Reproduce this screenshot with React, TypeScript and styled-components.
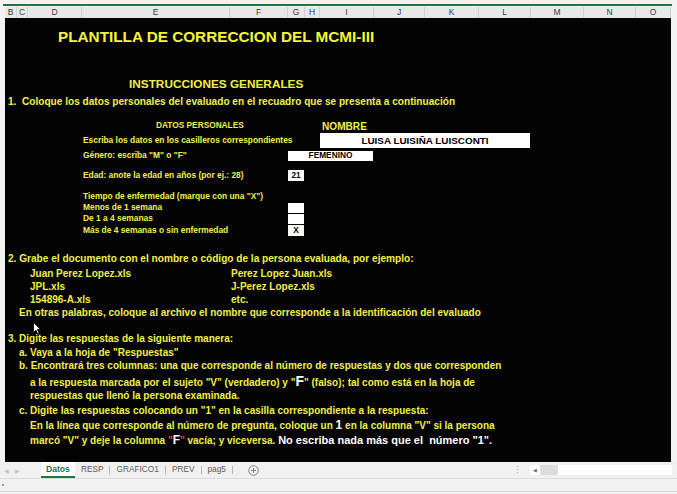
import React from "react";
import styled, { createGlobalStyle } from "styled-components";

const GlobalStyle = createGlobalStyle`
  html, body { margin: 0; padding: 0; background: #f3f3f3; }
  body {
    font-family: "Liberation Sans", Arial, sans-serif;
    width: 677px; height: 494px; overflow: hidden;
  }
`;

const COLS = "12px 11px 54px 148px 58px 17px 15px 54px 51px 54px 52px 53px 52px 35px";
const LETTERS = ["B", "C", "D", "E", "F", "G", "H", "I", "J", "K", "L", "M", "N", "O"];

const YEL = "#f0ef48";

const Window = styled.div`
  width: 677px;
  height: 494px;
  display: flex;
  flex-direction: column;
  background: #f3f3f3;
`;

const GreenLine = styled.div`
  height: 2px;
  margin: 4px 5px 0 3px;
  background: #217346;
`;

const HeaderRow = styled.div`
  margin: 1px 0 0 5px;
  width: 666px;
  height: 11px;
  display: grid;
  grid-template-columns: ${COLS};
  background: #e8e8e8;
`;

const HeaderCell = styled.div`
  display: flex;
  align-items: center;
  justify-content: center;
  font-size: 8.5px;
  color: #3a3a3a;
  border-right: 1px solid #cfcfcf;
  line-height: 1;
`;

const Sheet = styled.div`
  position: relative;
  margin-left: 5px;
  width: 666px;
  height: 444px;
  background: #030303;
  overflow: hidden;
  padding-top: 10px;
  box-sizing: border-box;
`;

const Row = styled.div<{ $h: number; $mt?: number }>`
  display: grid;
  grid-template-columns: ${COLS};
  grid-template-rows: ${(p) => p.$h}px;
  height: ${(p) => p.$h}px;
  margin-top: ${(p) => p.$mt ?? 0}px;
  align-items: center;
`;

const Cell = styled.div<{ $col: number; $span?: number; $pl?: number; $self?: string }>`
  grid-column: ${(p) => p.$col} / span ${(p) => p.$span ?? 1};
  padding-left: ${(p) => p.$pl ?? 0}px;
  white-space: pre;
  overflow: visible;
  align-self: ${(p) => p.$self ?? "center"};
  min-width: 0;
  font-size: 10px;
  line-height: 1;
  display: flex;
  align-items: baseline;
`;

const Txt = styled.span<{ $size?: number; $color?: string }>`
  font-weight: bold;
  font-size: ${(p) => p.$size ?? 10}px;
  color: ${(p) => p.$color ?? YEL};
  line-height: 1;
`;

const Box = styled.div<{ $col: number; $span?: number; $h?: number }>`
  grid-column: ${(p) => p.$col} / span ${(p) => p.$span ?? 1};
  height: ${(p) => p.$h ?? 11}px;
  background: #ffffff;
  margin: 0 1px 0 0;
  display: flex;
  align-items: center;
  justify-content: center;
  font-weight: bold;
  font-size: ${(p) => (p.$h && p.$h > 12 ? 9.9 : 8.3)}px;
  line-height: 1;
  color: #000;
  white-space: nowrap;
  overflow: visible;
`;

const Cursor = styled.svg`
  position: absolute;
  left: 28px;
  top: 304px;
`;

const TabBar = styled.div`
  height: 16px;
  display: flex;
  align-items: stretch;
  background: #f0f0f0;
  font-size: 8.3px;
`;

const NavArrows = styled.div`
  width: 41px;
  display: flex;
  align-items: center;
  gap: 6px;
  padding-left: 4px;
  box-sizing: border-box;
  color: #c4c4c4;
  font-size: 6px;
`;

const Tab = styled.div<{ $active?: boolean }>`
  display: flex;
  align-items: center;
  padding: 0 ${(p) => (p.$active ? 5 : 6)}px;
  background: ${(p) => (p.$active ? "#ffffff" : "transparent")};
  color: ${(p) => (p.$active ? "#217346" : "#5a5a5a")};
  font-weight: ${(p) => (p.$active ? "bold" : "normal")};
  font-size: ${(p) => (p.$active ? 8.6 : 8.3)}px;
  border-bottom: 2px solid ${(p) => (p.$active ? "#217346" : "transparent")};
  box-sizing: border-box;
`;

const TabSep = styled.div`
  width: 1px;
  background: #b8b8b8;
  margin: 4px 0;
`;

const AddTab = styled.div`
  display: flex;
  align-items: center;
  margin-left: 15px;
`;

const Spacer = styled.div`
  flex: 1;
`;

const Dots = styled.div`
  display: flex;
  align-items: center;
  color: #a8a8a8;
  font-size: 9px;
  margin-right: 8px;
`;

const Scroll = styled.div`
  display: flex;
  align-items: center;
  width: 142px;
  margin-right: 5px;
`;

const ScrollBtn = styled.div`
  width: 10px;
  height: 10px;
  background: #ffffff;
  display: flex;
  align-items: center;
  justify-content: center;
  color: #666;
  font-size: 5px;
`;

const ScrollThumb = styled.div`
  width: 18px;
  height: 10px;
  background: #dcdcdc;
`;

const ScrollTrack = styled.div`
  flex: 1;
  height: 10px;
  background: #ffffff;
`;

const StatusBar = styled.div`
  height: 12px;
  background: #f1f1f1;
  border-top: 1px solid #dddddd;
  border-bottom: 1px solid #d6d6d6;
  display: flex;
  align-items: center;
  padding-left: 2px;
`;

const Dot = styled.div`
  width: 2px;
  height: 2px;
  background: #999;
`;

export default function App() {
  return (
    <>
      <GlobalStyle />
      <Window>
        <GreenLine />
        <HeaderRow>
          {LETTERS.map((l) => (
            <HeaderCell key={l}>{l}</HeaderCell>
          ))}
        </HeaderRow>
        <Sheet>
          <Row $h={18}>
            <Cell $col={3} $pl={30}>
              <Txt $size={15.3} $color="#f6f53a">PLANTILLA DE CORRECCION DEL MCMI-III</Txt>
            </Cell>
          </Row>
          <Row $h={16} $mt={31}>
            <Cell $col={4} $pl={47}>
              <Txt $size={11.8}>INSTRUCCIONES GENERALES</Txt>
            </Cell>
          </Row>
          <Row $h={14} $mt={2}>
            <Cell $col={1} $pl={3}>
              <Txt $size={10.1}>1.  Coloque los datos personales del evaluado en el recuadro que se presenta a continuación</Txt>
            </Cell>
          </Row>
          <Row $h={14} $mt={9}>
            <Cell $col={4} $pl={74}>
              <Txt $size={8.3}>DATOS PERSONALES</Txt>
            </Cell>
            <Cell $col={8} $pl={2} $self="end">
              <Txt $size={10.1}>NOMBRE</Txt>
            </Cell>
          </Row>
          <Row $h={15} $mt={1}>
            <Cell $col={4} $pl={1}>
              <Txt $size={8.4}>Escriba los datos en los casilleros correspondientes</Txt>
            </Cell>
            <Box $col={8} $span={4} $h={15}>LUISA LUISIÑA LUISCONTI</Box>
          </Row>
          <Row $h={11} $mt={2}>
            <Cell $col={4} $pl={1}>
              <Txt $size={8.4}>Género: escriba "M" o "F"</Txt>
            </Cell>
            <Box $col={6} $span={3} $h={10}>FEMENINO</Box>
          </Row>
          <Row $h={11} $mt={9}>
            <Cell $col={4} $pl={1}>
              <Txt $size={8.4}>Edad: anote la edad en años (por ej.: 28)</Txt>
            </Cell>
            <Box $col={6}>21</Box>
          </Row>
          <Row $h={11} $mt={10}>
            <Cell $col={4} $pl={1}>
              <Txt $size={8.4}>Tiempo de enfermedad (marque con una "X")</Txt>
            </Cell>
          </Row>
          <Row $h={11} $mt={0}>
            <Cell $col={4} $pl={1}>
              <Txt $size={8.4}>Menos de 1 semana</Txt>
            </Cell>
            <Box $col={6} $h={10} />
          </Row>
          <Row $h={11}>
            <Cell $col={4} $pl={1}>
              <Txt $size={8.4}>De 1 a 4 semanas</Txt>
            </Cell>
            <Box $col={6} $h={10} />
          </Row>
          <Row $h={11} $mt={1}>
            <Cell $col={4} $pl={1}>
              <Txt $size={8.4}>Más de 4 semanas o sin enfermedad</Txt>
            </Cell>
            <Box $col={6}>X</Box>
          </Row>

          <Row $h={14} $mt={16}>
            <Cell $col={1} $pl={3}>
              <Txt $size={10.1}>2. Grabe el documento con el nombre o código de la persona evaluada, por ejemplo:</Txt>
            </Cell>
          </Row>
          <Row $h={13} $mt={1}>
            <Cell $col={3} $pl={2}><Txt>Juan Perez Lopez.xls</Txt></Cell>
            <Cell $col={5} $pl={1}><Txt>Perez Lopez Juan.xls</Txt></Cell>
          </Row>
          <Row $h={13}>
            <Cell $col={3} $pl={2}><Txt>JPL.xls</Txt></Cell>
            <Cell $col={5} $pl={1}><Txt>J-Perez Lopez.xls</Txt></Cell>
          </Row>
          <Row $h={13}>
            <Cell $col={3} $pl={2}><Txt>154896-A.xls</Txt></Cell>
            <Cell $col={5} $pl={1}><Txt>etc.</Txt></Cell>
          </Row>
          <Row $h={13}>
            <Cell $col={2} $pl={2}>
              <Txt>En otras palabras, coloque al archivo el nombre que corresponde a la identificación del evaluado</Txt>
            </Cell>
          </Row>

          <Row $h={14} $mt={13}>
            <Cell $col={1} $pl={3}>
              <Txt>3. Digite las respuestas de la siguiente manera:</Txt>
            </Cell>
          </Row>
          <Row $h={13}>
            <Cell $col={2} $pl={2}><Txt>a. Vaya a la hoja de "Respuestas"</Txt></Cell>
          </Row>
          <Row $h={13}>
            <Cell $col={2} $pl={2}>
              <Txt>b. Encontrará tres columnas: una que corresponde al número de respuestas y dos que corresponden</Txt>
            </Cell>
          </Row>
          <Row $h={16} $mt={1}>
            <Cell $col={3} $pl={2}>
              <Txt>a la respuesta marcada por el sujeto "V" (verdadero) y "</Txt>
              <Txt $size={14} $color="#ffffff">F</Txt>
              <Txt>" (falso); tal como está en la hoja de</Txt>
            </Cell>
          </Row>
          <Row $h={13}>
            <Cell $col={3} $pl={2}><Txt>respuestas que llenó la persona examinada.</Txt></Cell>
          </Row>
          <Row $h={14} $mt={2}>
            <Cell $col={2} $pl={2}>
              <Txt>c. Digite las respuestas colocando un "1" en la casilla correspondiente a la respuesta:</Txt>
            </Cell>
          </Row>
          <Row $h={14}>
            <Cell $col={3} $pl={2}>
              <Txt>En la línea que corresponde al número de pregunta, coloque un </Txt>
              <Txt $size={12} $color="#ffffff">1</Txt>
              <Txt> en la columna "V" si la persona</Txt>
            </Cell>
          </Row>
          <Row $h={14} $mt={1}>
            <Cell $col={3} $pl={2}>
              <Txt>marcó "V" y deje la columna </Txt>
              <Txt $color="#ff3b3b">"</Txt>
              <Txt $size={12} $color="#ffffff">F</Txt>
              <Txt $color="#ff3b3b">"</Txt>
              <Txt> vacía; y viceversa. </Txt>
              <Txt $size={11} $color="#ffffff">No escriba nada más que el  número "1".</Txt>
            </Cell>
          </Row>

          <Cursor width="9" height="13" viewBox="0 0 9 13">
            <path d="M0.5 0.5 L0.5 10.5 L3 8.2 L4.8 12 L6.2 11.3 L4.5 7.6 L7.8 7.6 Z" fill="#ffffff" stroke="#000" strokeWidth="0.8" />
          </Cursor>
        </Sheet>
        <TabBar>
          <NavArrows>
            <span>◀</span>
            <span>▶</span>
          </NavArrows>
          <Tab $active>Datos</Tab>
          <Tab>RESP</Tab>
          <TabSep />
          <Tab>GRAFICO1</Tab>
          <TabSep />
          <Tab>PREV</Tab>
          <TabSep />
          <Tab>pag5</Tab>
          <TabSep />
          <AddTab>
            <svg width="11" height="11" viewBox="0 0 11 11">
              <circle cx="5.5" cy="5.5" r="4.8" fill="none" stroke="#777" strokeWidth="0.9" />
              <path d="M5.5 3 V8 M3 5.5 H8" stroke="#777" strokeWidth="0.9" />
            </svg>
          </AddTab>
          <Spacer />
          <Dots>⋮</Dots>
          <Scroll>
            <ScrollBtn>◀</ScrollBtn>
            <ScrollThumb />
            <ScrollTrack />
          </Scroll>
        </TabBar>
        <StatusBar>
          <Dot />
        </StatusBar>
      </Window>
    </>
  );
}
